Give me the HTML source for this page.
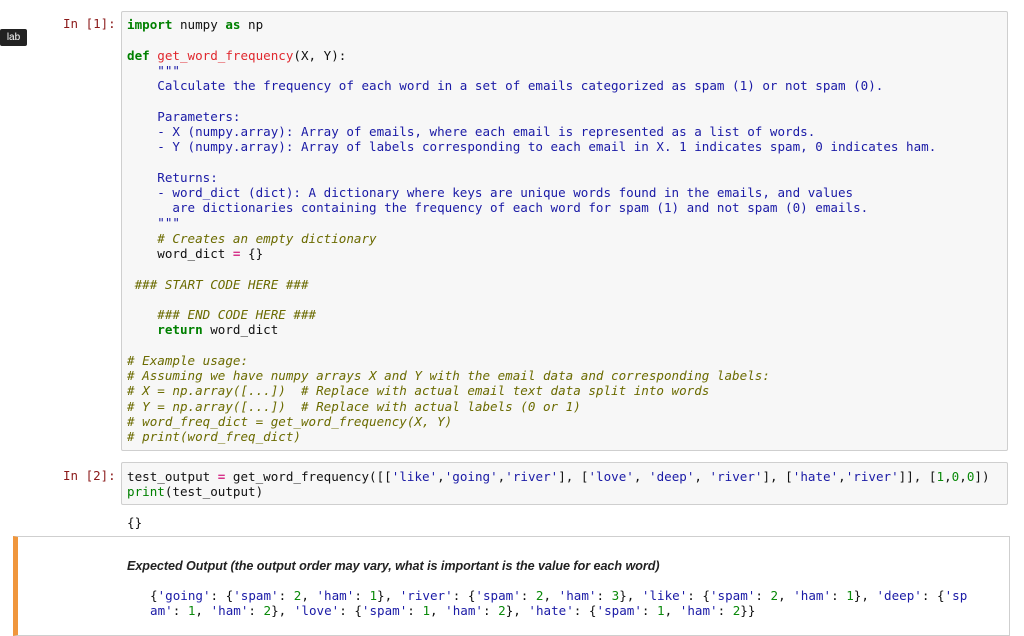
<!DOCTYPE html>
<html><head><style>
body{margin:0;width:1024px;height:626px;background:#fff;position:relative;overflow:hidden;font-family:"DejaVu Sans Mono",monospace;}
.p{position:absolute;font-family:"DejaVu Sans Mono",monospace;font-size:12.5px;color:#8b1a1a;}
.box{position:absolute;background:#f7f7f7;border:1px solid #cfcfcf;border-radius:2px;}
pre{margin:0;font-family:"DejaVu Sans Mono",monospace;font-size:12.57px;line-height:15.26px;color:#111;position:absolute;}
.k{color:#008000;font-weight:bold}
.f{color:#e0282e}
.s{color:#1a1aa6}
.c{color:#6b6b00;font-style:italic}
.n{color:#0a8a0a}
.o{color:#d6338a;font-weight:bold}
.b{color:#008000}
</style></head><body>
<div style="position:absolute;left:0;top:29px;width:27px;height:17px;background:#222;color:#fff;font-family:'Liberation Sans',sans-serif;font-size:10px;line-height:17px;text-align:center;border-radius:2px">lab</div>
<div class="p" style="left:63px;top:16px">In [1]:</div>
<div class="box" style="left:121px;top:11px;width:885px;height:438px"></div>
<pre style="left:127px;top:17px"><span class="k">import</span> numpy <span class="k">as</span> np

<span class="k">def</span> <span class="f">get_word_frequency</span>(X, Y):
<span class="s">    """
    Calculate the frequency of each word in a set of emails categorized as spam (1) or not spam (0).

    Parameters:
    - X (numpy.array): Array of emails, where each email is represented as a list of words.
    - Y (numpy.array): Array of labels corresponding to each email in X. 1 indicates spam, 0 indicates ham.

    Returns:
    - word_dict (dict): A dictionary where keys are unique words found in the emails, and values
      are dictionaries containing the frequency of each word for spam (1) and not spam (0) emails.
    """</span>
    <span class="c"># Creates an empty dictionary</span>
    word_dict <span class="o">=</span> {}

 <span class="c">### START CODE HERE ###</span>

    <span class="c">### END CODE HERE ###</span>
    <span class="k">return</span> word_dict

<span class="c"># Example usage:
# Assuming we have numpy arrays X and Y with the email data and corresponding labels:
# X = np.array([...])  # Replace with actual email text data split into words
# Y = np.array([...])  # Replace with actual labels (0 or 1)
# word_freq_dict = get_word_frequency(X, Y)
# print(word_freq_dict)</span></pre>
<div class="p" style="left:63px;top:468px">In [2]:</div>
<div class="box" style="left:121px;top:462px;width:885px;height:41px"></div>
<pre style="left:127px;top:469px">test_output <span class="o">=</span> get_word_frequency([[<span class="s">'like'</span>,<span class="s">'going'</span>,<span class="s">'river'</span>], [<span class="s">'love'</span>, <span class="s">'deep'</span>, <span class="s">'river'</span>], [<span class="s">'hate'</span>,<span class="s">'river'</span>]], [<span class="n">1</span>,<span class="n">0</span>,<span class="n">0</span>])
<span class="b">print</span>(test_output)</pre>
<pre style="left:127px;top:515px">{}</pre>
<div style="position:absolute;left:13px;top:536px;width:997px;height:100px;border:1px solid #cfcfcf;border-left:5px solid #f0963c;box-sizing:border-box"></div>
<div style="position:absolute;left:127px;top:559px;font-family:'Liberation Sans',sans-serif;font-size:12.6px;font-weight:bold;font-style:italic;color:#222;letter-spacing:-0.05px">Expected Output (the output order may vary, what is important is the value for each word)</div>
<pre style="left:150px;top:588px">{<span class="s">'going'</span>: {<span class="s">'spam'</span>: <span class="n">2</span>, <span class="s">'ham'</span>: <span class="n">1</span>}, <span class="s">'river'</span>: {<span class="s">'spam'</span>: <span class="n">2</span>, <span class="s">'ham'</span>: <span class="n">3</span>}, <span class="s">'like'</span>: {<span class="s">'spam'</span>: <span class="n">2</span>, <span class="s">'ham'</span>: <span class="n">1</span>}, <span class="s">'deep'</span>: {<span class="s">'sp
am'</span>: <span class="n">1</span>, <span class="s">'ham'</span>: <span class="n">2</span>}, <span class="s">'love'</span>: {<span class="s">'spam'</span>: <span class="n">1</span>, <span class="s">'ham'</span>: <span class="n">2</span>}, <span class="s">'hate'</span>: {<span class="s">'spam'</span>: <span class="n">1</span>, <span class="s">'ham'</span>: <span class="n">2</span>}}</pre>
</body></html>
